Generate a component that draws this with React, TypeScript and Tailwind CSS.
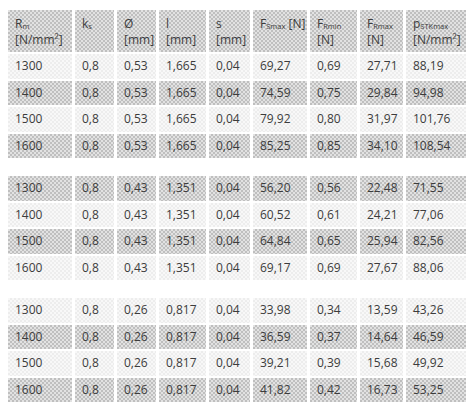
const dark =
  'bg-[image:conic-gradient(#bfbfbf_25%,#e2e2e2_0_50%,#bfbfbf_0_75%,#e2e2e2_0)] bg-size-[4px_4px]';
const light =
  'bg-[image:conic-gradient(#ededed_25%,#f8f8f8_0_50%,#ededed_0_75%,#f8f8f8_0)] bg-size-[4px_4px]';

type Group = { d: string; l: string; first: 'light' | 'dark'; rows: string[][] };

const groups: Group[] = [
  {
    d: '0,53',
    l: '1,665',
    first: 'light',
    rows: [
      ['1300', '69,27', '0,69', '27,71', '88,19'],
      ['1400', '74,59', '0,75', '29,84', '94,98'],
      ['1500', '79,92', '0,80', '31,97', '101,76'],
      ['1600', '85,25', '0,85', '34,10', '108,54'],
    ],
  },
  {
    d: '0,43',
    l: '1,351',
    first: 'dark',
    rows: [
      ['1300', '56,20', '0,56', '22,48', '71,55'],
      ['1400', '60,52', '0,61', '24,21', '77,06'],
      ['1500', '64,84', '0,65', '25,94', '82,56'],
      ['1600', '69,17', '0,69', '27,67', '88,06'],
    ],
  },
  {
    d: '0,26',
    l: '0,817',
    first: 'light',
    rows: [
      ['1300', '33,98', '0,34', '13,59', '43,26'],
      ['1400', '36,59', '0,37', '14,64', '46,59'],
      ['1500', '39,21', '0,39', '15,68', '49,92'],
      ['1600', '41,82', '0,42', '16,73', '53,25'],
    ],
  },
];

const Sub = ({ children }: { children: React.ReactNode }) => (
  <sub className="text-[7.5px] -bottom-[1px] leading-none">{children}</sub>
);

function Head({ children }: { children: React.ReactNode }) {
  return (
    <div className={`${dark} h-[42px] pl-[7px] pt-[6px] pb-[3px] leading-[16px]`}>{children}</div>
  );
}

export default function App() {
  return (
    <div
      className="w-[474px] h-[414px] bg-white pt-[10px] px-[8px] text-[12px] text-[#3c3c3c]"
      style={{ fontFamily: '"Open Sans", "Liberation Sans", sans-serif' }}
    >
      <div className="grid grid-cols-[64px_39px_39px_47px_41px_54px_47px_43px_60px] gap-x-[3px] gap-y-[2px]">
        <Head>
          R<Sub>m</Sub>
          <br />
          [N/mm²]
        </Head>
        <Head>
          k<Sub>s</Sub>
        </Head>
        <Head>
          Ø<br />
          [mm]
        </Head>
        <Head>
          l<br />
          [mm]
        </Head>
        <Head>
          s<br />
          [mm]
        </Head>
        <Head>
          F<Sub>Smax</Sub> [N]
        </Head>
        <Head>
          F<Sub>Rmin</Sub>
          <br />
          [N]
        </Head>
        <Head>
          F<Sub>Rmax</Sub>
          <br />
          [N]
        </Head>
        <Head>
          p<Sub>STKmax</Sub>
          <br />
          [N/mm²]
        </Head>

        {groups.map((g, gi) => (
          <>
            {gi > 0 && <div key={`sp${gi}`} className="col-span-9 h-[14px]" />}
            {g.rows.map((r, ri) => {
              const isDark = (ri % 2 === 0) === (g.first === 'dark');
              const cells = [r[0], '0,8', g.d, g.l, '0,04', r[1], r[2], r[3], r[4]];
              return cells.map((c, ci) => (
                <div
                  key={`${gi}-${ri}-${ci}`}
                  className={`${isDark ? dark : light} h-[24.5px] pl-[7px] flex items-center`}
                >
                  {c}
                </div>
              ));
            })}
          </>
        ))}
      </div>
    </div>
  );
}
